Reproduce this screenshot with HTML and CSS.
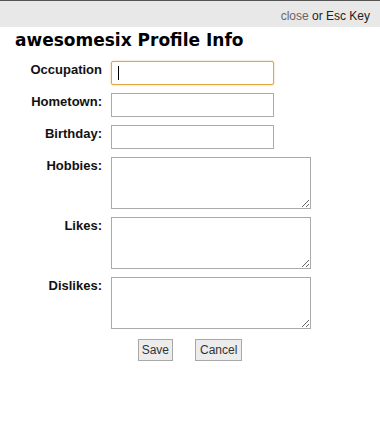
FILE: index.html
```html
<!DOCTYPE html>
<html lang="en">
<head>
  <meta charset="UTF-8"/>
  <title>awesomesix Profile Info</title>
  <link rel="stylesheet" href="styles.css">
</head>
<body>
  <div class="topbar"><a class="close" href="#">close</a> or Esc Key</div>
  <h1 class="title">awesomesix Profile Info</h1>
  <form class="profile-form" onsubmit="return false">
    <div class="row"><label for="occupation">Occupation</label><span class="field caret"><input id="occupation" class="focused" type="text"/></span></div>
    <div class="row"><label for="hometown">Hometown:</label><span class="field"><input id="hometown" type="text"/></span></div>
    <div class="row"><label for="birthday">Birthday:</label><span class="field"><input id="birthday" type="text"/></span></div>
    <div class="row"><label for="hobbies">Hobbies:</label><span class="field"><textarea id="hobbies"></textarea></span></div>
    <div class="row"><label for="likes">Likes:</label><span class="field"><textarea id="likes"></textarea></span></div>
    <div class="row"><label for="dislikes">Dislikes:</label><span class="field"><textarea id="dislikes"></textarea></span></div>
    <div class="buttons">
      <button type="submit">Save</button>
      <button type="button">Cancel</button>
    </div>
  </form>
</body>
</html>
```

FILE: styles.css
```css
*{box-sizing:border-box;margin:0;padding:0;}
body{font-family:"Liberation Sans",Arial,sans-serif;background:#fff;color:#111;}
.topbar{border-top:1px solid #555;background:#e8e8e8;padding:6px 10px 2px 0;line-height:18px;font-size:12px;color:#222;text-align:right;}
.close{color:#666;text-decoration:none;}
.title{font-family:"DejaVu Sans",Verdana,sans-serif;font-size:17px;font-weight:bold;color:#000;margin:3px 0 0 15px;line-height:20px;}
.profile-form{margin-top:11px;}
.row{display:flex;align-items:flex-start;margin-bottom:8px;}
.row label{width:102px;text-align:right;font-size:13px;font-weight:bold;line-height:15px;padding-top:1px;color:#111;}
.field{display:block;position:relative;margin-left:9px;}
.field input,.field textarea{display:block;border:1px solid #aaa;background:#fff;font-family:"Liberation Sans",Arial,sans-serif;font-size:13px;padding:2px 4px;color:#000;}
.field input{width:163px;height:24px;}
.field textarea{width:200px;height:52px;resize:both;}
.field .focused,.field input:focus,.field textarea:focus{outline:none;border-color:#e2a643;border-radius:2px;box-shadow:0 0 2px #f0c070;}
.caret::after{content:"";position:absolute;left:7px;top:5px;width:1px;height:14px;background:#000;}
.buttons{display:flex;justify-content:center;gap:22px;margin-top:10px;}
.buttons button{height:22px;padding:0 3px;border:1px solid #a8a8a8;background:#ececec;color:#333;font-family:"Liberation Sans",Arial,sans-serif;font-size:12px;cursor:pointer;}
.buttons button:last-child{padding:0 4px;}
```
